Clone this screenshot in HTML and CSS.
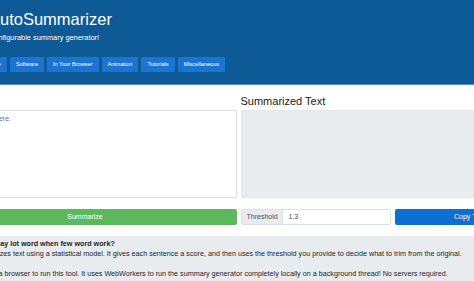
FILE: index.html
```html
<!DOCTYPE html>
<html lang="en">
    <head>
        <meta charset="UTF-8" />
        <meta name="viewport" content="width=device-width, initial-scale=1.0" />
        <title>AutoSummarizer</title>
        <link rel="stylesheet" href="styles.css">
    </head>
    <body>
        <div class="page">
            <header class="top">
                <h1 class="title">AutoSummarizer</h1>
                <p class="lead">Configurable summary generator!</p>
                <nav class="nav">
                    <a class="navbtn" href="#">Home</a>
                    <a class="navbtn" href="#">Software</a>
                    <a class="navbtn" href="#">In Your Browser</a>
                    <a class="navbtn" href="#">Animation</a>
                    <a class="navbtn" href="#">Tutorials</a>
                    <a class="navbtn" href="#">Miscellaneous</a>
                </nav>
            </header>

            <main class="work">
                <div class="col">
                    <h2 class="coltitle">&nbsp;</h2>
                    <textarea class="box" placeholder="Paste your article here."></textarea>
                    <button class="btn go">Summarize</button>
                </div>

                <div class="col">
                    <h2 class="coltitle">Summarized Text</h2>
                    <textarea class="box out" readonly></textarea>
                    <div class="tools">
                        <div class="thresh">
                            <span class="tlabel">Threshold</span>
                            <input class="tinput" type="text" value="1.3" />
                        </div>
                        <button class="btn copy">Copy Text</button>
                    </div>
                </div>
            </main>

            <section class="about">
                <p>
                    <b>Why say lot word when few word work?</b><br />
                    Minimizes text using a statistical model. It gives each sentence a score, and then uses the threshold you provide to decide what to trim from the original.
                </p>
                <p>
                    Open a browser to run this tool. It uses WebWorkers to run the summary generator completely locally on a background thread! No servers required.
                </p>
            </section>
        </div>
    </body>
</html>
```

FILE: styles.css
```css
* {
    box-sizing: border-box;
}

body {
    margin: 0;
    overflow: hidden;
    background: white;
    font-family: "Liberation Sans", Arial, sans-serif;
    color: #212529;
}

.page {
    width: 618px;
    margin-left: -70px;
}

.top {
    background: #0e5a97;
    border-bottom: 1px solid #4b93d6;
    padding: 10.4px 0 11.5px 59px;
    color: white;
}

.title {
    margin: 0;
    font-size: 16.5px;
    font-weight: normal;
    line-height: 19.8px;
}

.lead {
    margin: 1.7px 0 0 0;
    font-size: 7.4px;
    line-height: 11.1px;
}

.nav {
    margin-top: 14.5px;
    margin-left: -9px;
    display: flex;
    gap: 3px;
}

.navbtn {
    background: #1a75d2;
    color: white;
    text-decoration: none;
    font-size: 5.6px;
    height: 15px;
    line-height: 15px;
    padding: 0 6px;
    border-radius: 1px;
}

.work {
    margin-top: 10px;
    padding: 0 3px;
    display: grid;
    grid-template-columns: 304px 304px;
    gap: 3.5px;
}

.coltitle {
    margin: 0 0 1.8px 0;
    font-size: 11px;
    font-weight: normal;
    line-height: 13.2px;
    color: #161a1d;
}

.box {
    display: block;
    width: 100%;
    height: 88px;
    resize: none;
    margin: 0;
    padding: 3px 5px;
    border: 1px solid #dcdfe3;
    border-radius: 2px;
    background: white;
    font-family: "Liberation Sans", Arial, sans-serif;
    font-size: 7px;
    line-height: 10px;
    color: #212529;
}

.box::placeholder {
    color: #6c757d;
}

.box.out {
    background: #e9ecef;
    border-color: #e3e6ea;
}

.btn {
    display: block;
    height: 16px;
    margin: 11px 0 0 0;
    padding: 0;
    border: none;
    border-radius: 2px;
    color: white;
    font-family: "Liberation Sans", Arial, sans-serif;
    font-size: 7px;
    cursor: pointer;
}

.go {
    width: 100%;
    background: #5cb85c;
}

.tools {
    display: grid;
    grid-template-columns: 150px 150px;
    gap: 4px;
}

.tools .btn {
    width: 100%;
}

.copy {
    background: #0b6fd4;
}

.thresh {
    margin-top: 11px;
    height: 16px;
    display: flex;
}

.tlabel {
    width: 42px;
    height: 16px;
    line-height: 14px;
    padding: 0 5px;
    background: #e9ecef;
    border: 1px solid #dcdfe3;
    border-radius: 2px 0 0 2px;
    font-size: 7px;
    color: #495057;
    text-align: center;
}

.tinput {
    flex: 1;
    min-width: 0;
    height: 16px;
    margin: 0;
    padding: 0 6px;
    border: 1px solid #dcdfe3;
    border-left: none;
    border-radius: 0 2px 2px 0;
    font-family: "Liberation Sans", Arial, sans-serif;
    font-size: 7px;
    color: #495057;
}

.about {
    margin-top: 11px;
    height: 60px;
    background: #e9ecef;
    padding: 3.5px 0 0 49px;
    font-size: 7.2px;
    line-height: 10px;
}

.about p {
    margin: 0 0 10px 0;
}
```
